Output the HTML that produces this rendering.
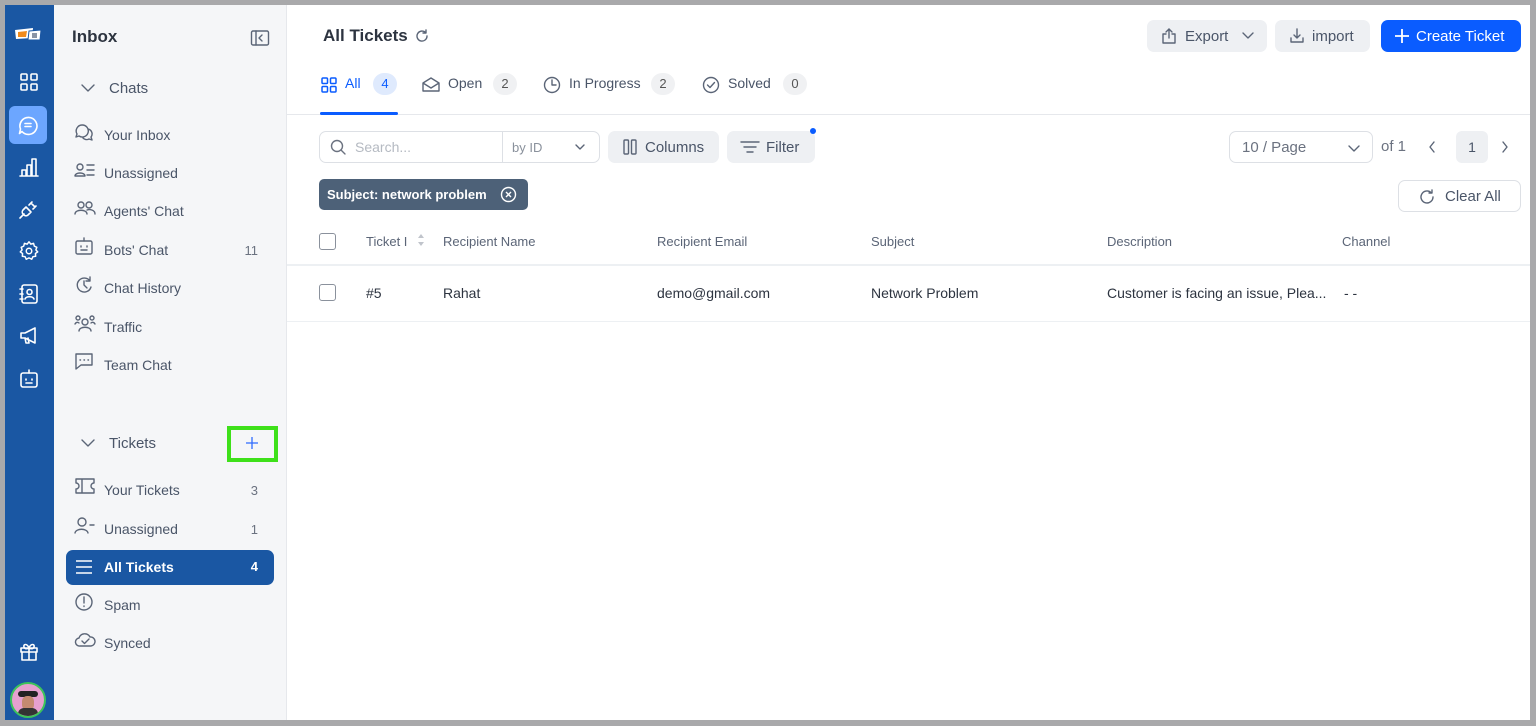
<!DOCTYPE html>
<html><head><meta charset="utf-8"><style>
*{box-sizing:border-box;margin:0;padding:0}
body{width:1536px;height:726px;background:#a9a9ab;font-family:"Liberation Sans",sans-serif;position:relative;overflow:hidden}
.a{position:absolute}
#frame{position:absolute;left:5px;top:5px;width:1525px;height:715px;background:#fff;overflow:hidden}
#rail{position:absolute;left:0;top:0;width:49px;height:715px;background:#1a57a3}
#side{position:absolute;left:49px;top:0;width:233px;height:715px;background:#f5f6f8;border-right:1px solid #e6e8ec}
.ic{position:absolute;stroke:#fff;fill:none;stroke-width:1.6;stroke-linecap:round;stroke-linejoin:round}
.si{position:absolute;stroke:#5b6577;fill:none;stroke-width:1.4;stroke-linecap:round;stroke-linejoin:round}
.it{position:absolute;left:50px;font-size:14px;color:#4a5568}
.cnt{position:absolute;right:28px;font-size:13px;color:#6b7280}
.hd{position:absolute;font-size:13px;color:#5b6577}
.btn{position:absolute;border-radius:7px;background:#eef0f3;font-size:15px;color:#4a5568}
.badge{display:inline-block;border-radius:12px;background:#f0f1f3;font-size:13px;color:#555;width:24px;height:22px;line-height:22px;text-align:center}
.tab{position:absolute;top:70px;font-size:14px;color:#4a5568}
.cb{position:absolute;width:17px;height:17px;border:1.5px solid #8a919c;border-radius:3px}
</style></head><body>
<div id="frame">
<div id="rail">
 <svg class="a" style="left:8px;top:22px" width="30" height="16" viewBox="0 0 30 16"><path d="M2 3 L20 1 L19 11 L3 12 Z" fill="#fff"/><path d="M5 5 L14 4 L13 10 L5 10Z" fill="#f08a1c"/><path d="M16 4 L28 3 L27 13 L15 13Z" fill="#fff" stroke="#1a57a3"/><rect x="19" y="6" width="5" height="5" fill="#8b95a5"/></svg>
 <svg class="ic" style="left:14px;top:67px" width="20" height="20" viewBox="0 0 20 20"><rect x="2" y="2" width="6" height="6" rx="1"/><rect x="12" y="2" width="6" height="6" rx="1"/><rect x="2" y="12" width="6" height="6" rx="1"/><rect x="12" y="12" width="6" height="6" rx="1"/></svg>
 <div class="a" style="left:4px;top:101px;width:38px;height:38px;border-radius:6px;background:#6ca6ff"></div>
 <svg class="ic" style="left:12px;top:109px" width="22" height="22" viewBox="0 0 22 22"><path d="M5 17.5A8.5 8.5 0 1 0 3.5 15L2.5 19.5z"/><path d="M8 9.5h6M8 12.5h6"/></svg>
 <svg class="ic" style="left:13px;top:151px" width="22" height="22" viewBox="0 0 22 22"><path d="M2 20h18M4 20v-6h4v6M9 20V9h4v11M14 20V3h4v17"/></svg>
 <svg class="ic" style="left:13px;top:193px" width="22" height="22" viewBox="0 0 22 22"><path d="M2 20l4-4M8 9l5 5-3 3a3 3 0 0 1-4 0l-1-1a3 3 0 0 1 0-4zM14 4l-3 3M18 8l-3 3M13 5l4 4"/></svg>
 <svg class="ic" style="left:13px;top:235px" width="22" height="22" viewBox="0 0 24 24"><circle cx="12" cy="12" r="3"/><path d="M12 2l2 2.5 3-.8.8 3L20.5 8l-1 2.8L21.5 13l-2.5 1.7.3 3-3 .5-1.3 2.8L12 19.5 9 21l-1.3-2.8-3-.5.3-3L2.5 13l2-2.2L3.5 8l2.7-1.3.8-3 3 .8z"/></svg>
 <svg class="ic" style="left:13px;top:278px" width="22" height="22" viewBox="0 0 22 22"><rect x="4" y="2" width="15" height="18" rx="2"/><circle cx="11.5" cy="9" r="2.5"/><path d="M7 16c1-3 8-3 9 0M2 6h3M2 11h3M2 16h3"/></svg>
 <svg class="ic" style="left:13px;top:320px" width="22" height="22" viewBox="0 0 22 22"><path d="M3 8h4l10-5v15L7 13H3zM7 13l1 5h3l-1-5"/></svg>
 <svg class="ic" style="left:13px;top:362px" width="22" height="22" viewBox="0 0 22 22"><rect x="3" y="6" width="16" height="14" rx="2"/><path d="M11 6V3M8 12v1M14 12v1M8 16h6"/></svg>
 <svg class="ic" style="left:13px;top:635px" width="22" height="22" viewBox="0 0 22 22"><rect x="3" y="8" width="16" height="4"/><path d="M4 12v8h14v-8M11 8v12M11 8c-2-5-6-4-5-1s5 1 5 1c2-5 6-4 5-1s-5 1-5 1"/></svg>
 <div class="a" style="left:5px;top:677px;width:36px;height:36px;border-radius:50%;border:2px solid #3cc45a;background:#e6a0cf;overflow:hidden"><div style="position:absolute;left:6px;top:7px;width:20px;height:6px;background:#222;border-radius:3px"></div><div style="position:absolute;left:10px;top:12px;width:12px;height:14px;background:#c48a70;border-radius:5px"></div><div style="position:absolute;left:6px;top:24px;width:20px;height:10px;background:#333;border-radius:6px 6px 0 0"></div></div>
</div>
<div id="side">
 <div class="a" style="left:18px;top:22px;font-size:17px;font-weight:bold;color:#2d3440">Inbox</div>
 <svg class="si" style="left:196px;top:24px" width="20" height="18" viewBox="0 0 20 18"><rect x="1.5" y="2" width="17" height="14" rx="1.5"/><path d="M6 2v14M12 6l-3 3 3 3"/></svg>
 <svg class="si" style="left:26px;top:77px" width="16" height="12" viewBox="0 0 16 12"><path d="M2 3l6 6 6-6"/></svg>
 <div class="a" style="left:55px;top:75px;font-size:15px;color:#4a5568">Chats</div>
 <svg class="si" style="left:20px;top:117px" width="20" height="20" viewBox="0 0 20 20"><path d="M8 3a6 6 0 0 0-5 9l-1 3 3-1a6 6 0 1 0 3-11zM14 7a5 5 0 0 1 3 8l1 3-3-1a5 5 0 0 1-6-1"/></svg><div class="it" style="top:122px">Your Inbox</div>
 <svg class="si" style="left:20px;top:155px" width="22" height="20" viewBox="0 0 22 20"><circle cx="6" cy="7" r="3"/><path d="M1 16c0-4 10-4 10 0zM13 5h7M13 10h7M13 15h7"/></svg><div class="it" style="top:160px">Unassigned</div>
 <svg class="si" style="left:20px;top:193px" width="22" height="20" viewBox="0 0 22 20"><circle cx="7" cy="7" r="3"/><circle cx="15" cy="7" r="3"/><path d="M1 16c0-5 12-5 12 0M13 12c3-1 8 0 8 4"/></svg><div class="it" style="top:198px">Agents' Chat</div>
 <svg class="si" style="left:20px;top:231px" width="20" height="20" viewBox="0 0 20 20"><rect x="2" y="5" width="16" height="13" rx="1.5"/><path d="M10 5V2M7 10v1M13 10v1M7 14h6"/></svg><div class="it" style="top:237px">Bots' Chat</div><div class="cnt" style="top:238px">11</div>
 <svg class="si" style="left:20px;top:270px" width="20" height="20" viewBox="0 0 20 20"><path d="M16 6A7 7 0 1 0 17 12M16 2v4h-4M10 6v4l3 3"/></svg><div class="it" style="top:275px">Chat History</div>
 <svg class="si" style="left:20px;top:308px" width="22" height="20" viewBox="0 0 22 20"><circle cx="11" cy="9" r="3"/><circle cx="4" cy="5" r="2"/><circle cx="18" cy="5" r="2"/><path d="M5 18c0-5 12-5 12 0M1 11c1-2 3-2 4-1M21 11c-1-2-3-2-4-1"/></svg><div class="it" style="top:314px">Traffic</div>
 <svg class="si" style="left:20px;top:346px" width="20" height="20" viewBox="0 0 20 20"><path d="M2 3h16v11H7l-5 4z"/><path d="M6 9h.5M10 9h.5M14 9h.5"/></svg><div class="it" style="top:352px">Team Chat</div>
 <svg class="si" style="left:26px;top:432px" width="16" height="12" viewBox="0 0 16 12"><path d="M2 3l6 6 6-6"/></svg>
 <div class="a" style="left:55px;top:430px;font-size:15px;color:#4a5568">Tickets</div>
 <div class="a" style="left:173px;top:421px;width:51px;height:36px;border:4px solid #3ee01a"></div>
 <svg class="a" style="left:192px;top:432px;stroke:#2f6bff;stroke-width:1.3" width="12" height="12" viewBox="0 0 12 12"><path d="M6 0v12M0 6h12"/></svg>
 <svg class="si" style="left:20px;top:471px" width="22" height="20" viewBox="0 0 22 20"><path d="M2 3h18v4a3 3 0 0 0 0 6v4H2v-4a3 3 0 0 0 0-6zM8 3v14"/></svg><div class="it" style="top:477px">Your Tickets</div><div class="cnt" style="top:478px">3</div>
 <svg class="si" style="left:20px;top:510px" width="22" height="20" viewBox="0 0 22 20"><circle cx="8" cy="7" r="4"/><path d="M1 18c1-5 12-5 13 0M16 10h4"/></svg><div class="it" style="top:516px">Unassigned</div><div class="cnt" style="top:517px">1</div>
 <div class="a" style="left:12px;top:545px;width:208px;height:35px;border-radius:7px;background:#1a57a3"></div>
 <svg class="a" style="left:21px;top:553px;stroke:#fff;stroke-width:1.6;fill:none" width="18" height="18" viewBox="0 0 18 18"><path d="M1 3h16M1 9h16M1 15h16"/></svg>
 <div class="it" style="top:554px;color:#fff;font-weight:bold">All Tickets</div><div class="cnt" style="top:554px;color:#fff;font-weight:bold">4</div>
 <svg class="si" style="left:20px;top:587px" width="20" height="20" viewBox="0 0 20 20"><circle cx="10" cy="10" r="8"/><path d="M10 5v6M10 14v.5"/></svg><div class="it" style="top:592px">Spam</div>
 <svg class="si" style="left:20px;top:625px" width="22" height="20" viewBox="0 0 22 20"><path d="M6 16a4 4 0 0 1-1-8 6 6 0 0 1 11-1 4.5 4.5 0 0 1 1 9zM8 11l2.5 2.5L15 9"/></svg><div class="it" style="top:630px">Synced</div>
</div>
<!-- main -->
<div class="a" style="left:318px;top:21px;font-size:17px;font-weight:bold;color:#2d3440">All Tickets</div>
<svg class="si" style="left:409px;top:23px" width="16" height="16" viewBox="0 0 16 16"><path d="M13 8a5 5 0 1 1-1.5-3.5M12 2v3h-3"/></svg>
<div class="btn" style="left:1142px;top:15px;width:120px;height:32px"><svg class="si" style="left:14px;top:8px" width="16" height="16" viewBox="0 0 16 16"><path d="M8 10V1M5 4l3-3 3 3M5 6H2v9h12V6h-3"/></svg><span class="a" style="left:38px;top:8px">Export</span><svg class="si" style="left:94px;top:11px" width="14" height="10" viewBox="0 0 14 10"><path d="M2 2l5 5 5-5"/></svg></div>
<div class="btn" style="left:1270px;top:15px;width:95px;height:32px"><svg class="si" style="left:14px;top:8px" width="16" height="16" viewBox="0 0 16 16"><path d="M8 1v9M5 7l3 3 3-3M2 10v4h12v-4"/></svg><span class="a" style="left:37px;top:8px">import</span></div>
<div class="a" style="left:1376px;top:15px;width:140px;height:32px;border-radius:7px;background:#0a5cff;color:#fff;font-size:15px"><svg class="a" style="left:14px;top:9px;stroke:#fff;stroke-width:1.8" width="14" height="14" viewBox="0 0 14 14"><path d="M7 0v14M0 7h14"/></svg><span class="a" style="left:35px;top:8px">Create Ticket</span></div>
<!-- tabs -->
<svg class="a" style="left:316px;top:72px;stroke:#0a5cff;fill:none;stroke-width:1.5" width="16" height="16" viewBox="0 0 16 16"><rect x="1" y="1" width="5.5" height="5.5" rx="1"/><rect x="9.5" y="1" width="5.5" height="5.5" rx="1"/><rect x="1" y="9.5" width="5.5" height="5.5" rx="1"/><rect x="9.5" y="9.5" width="5.5" height="5.5" rx="1"/></svg>
<div class="tab" style="left:340px;color:#0a5cff">All</div><div class="a" style="left:368px;top:68px"><span class="badge" style="background:#dfeafd;color:#0a5cff">4</span></div>
<svg class="si" style="left:417px;top:71px" width="18" height="17" viewBox="0 0 18 17"><path d="M1 7l8-5 8 5v8H1zM1 7l8 5 8-5"/></svg>
<div class="tab" style="left:443px">Open</div><div class="a" style="left:488px;top:68px"><span class="badge">2</span></div>
<svg class="si" style="left:538px;top:71px" width="18" height="18" viewBox="0 0 18 18"><circle cx="9" cy="9" r="7.5"/><path d="M9 4v5h4"/></svg>
<div class="tab" style="left:564px">In Progress</div><div class="a" style="left:646px;top:68px"><span class="badge">2</span></div>
<svg class="si" style="left:697px;top:71px" width="18" height="18" viewBox="0 0 18 18"><circle cx="9" cy="9" r="7.5"/><path d="M5.5 9l2.5 2.5L12.5 6.5"/></svg>
<div class="tab" style="left:723px">Solved</div><div class="a" style="left:778px;top:68px"><span class="badge">0</span></div>
<div class="a" style="left:282px;top:109px;width:1243px;height:1px;background:#e6e8ec"></div>
<div class="a" style="left:315px;top:107px;width:78px;height:3px;background:#0a5cff;border-radius:2px;z-index:2"></div>
<!-- toolbar -->
<div class="a" style="left:314px;top:126px;width:281px;height:32px;border:1px solid #dde0e5;border-radius:7px"></div>
<div class="a" style="left:497px;top:127px;width:1px;height:30px;background:#dde0e5"></div>
<svg class="si" style="left:325px;top:134px;stroke:#6b7280" width="16" height="16" viewBox="0 0 16 16"><circle cx="7" cy="7" r="5.5"/><path d="M11 11l4 4"/></svg>
<div class="a" style="left:350px;top:134px;font-size:14px;color:#b5bac2">Search...</div>
<div class="a" style="left:507px;top:135px;font-size:13px;color:#8a919c">by ID</div>
<svg class="si" style="left:569px;top:138px" width="12" height="8" viewBox="0 0 12 8"><path d="M2 2l4 4 4-4"/></svg>
<div class="btn" style="left:603px;top:126px;width:111px;height:32px"><svg class="si" style="left:15px;top:8px" width="14" height="16" viewBox="0 0 14 16"><rect x="1" y="1" width="4.5" height="14" rx="1"/><rect x="8.5" y="1" width="4.5" height="14" rx="1"/></svg><span class="a" style="left:37px;top:8px">Columns</span></div>
<div class="btn" style="left:722px;top:126px;width:88px;height:32px"><svg class="si" style="left:13px;top:9px" width="20" height="14" viewBox="0 0 20 14"><path d="M1 2h18M4 7h12M7 12h6"/></svg><span class="a" style="left:39px;top:8px">Filter</span></div>
<div class="a" style="left:805px;top:123px;width:6px;height:6px;border-radius:50%;background:#0a5cff"></div>
<div class="a" style="left:1224px;top:126px;width:144px;height:32px;border:1px solid #dde0e5;border-radius:7px"><span class="a" style="left:12px;top:7px;font-size:15px;color:#6b7280">10 / Page</span><svg class="si" style="left:117px;top:12px" width="14" height="9" viewBox="0 0 14 9"><path d="M2 2l5 5 5-5"/></svg></div>
<div class="a" style="left:1376px;top:133px;font-size:15px;color:#6b7280">of 1</div>
<svg class="si" style="left:1422px;top:135px" width="10" height="14" viewBox="0 0 10 14"><path d="M7 2L3 7l4 5"/></svg>
<div class="a" style="left:1451px;top:126px;width:32px;height:32px;border-radius:6px;background:#eef0f3;text-align:center;line-height:32px;font-size:14px;color:#4a5568">1</div>
<svg class="si" style="left:1495px;top:135px" width="10" height="14" viewBox="0 0 10 14"><path d="M3 2l4 5-4 5"/></svg>
<div class="a" style="left:314px;top:174px;width:209px;height:31px;border-radius:5px;background:#4d6178;color:#fff;font-size:13px;font-weight:bold"><span class="a" style="left:8px;top:8px">Subject: network problem</span><svg class="a" style="left:181px;top:7px;stroke:#fff;fill:none;stroke-width:1.4" width="17" height="17" viewBox="0 0 17 17"><circle cx="8.5" cy="8.5" r="7"/><path d="M6 6l5 5M11 6l-5 5"/></svg></div>
<div class="a" style="left:1393px;top:175px;width:123px;height:32px;border:1px solid #dde0e5;border-radius:7px"><svg class="si" style="left:19px;top:7px" width="18" height="18" viewBox="0 0 18 18"><path d="M15 9a6 6 0 1 1-2-4.5M14 2v3h-3"/></svg><span class="a" style="left:46px;top:7px;font-size:15px;color:#4a5568">Clear All</span></div>
<!-- table -->
<div class="cb" style="left:314px;top:228px"></div>
<div class="hd" style="left:361px;top:229px">Ticket I</div>
<svg class="a" style="left:411px;top:228px" width="10" height="14" viewBox="0 0 10 14"><path d="M5 1l3 4H2zM5 13l3-4H2z" fill="#c0c4cb"/></svg>
<div class="hd" style="left:438px;top:229px">Recipient Name</div>
<div class="hd" style="left:652px;top:229px">Recipient Email</div>
<div class="hd" style="left:866px;top:229px">Subject</div>
<div class="hd" style="left:1102px;top:229px">Description</div>
<div class="hd" style="left:1337px;top:229px">Channel</div>
<div class="a" style="left:282px;top:259px;width:1243px;height:2px;background:#edf0f3"></div>
<div class="cb" style="left:314px;top:279px"></div>
<div class="a" style="left:361px;top:280px;font-size:14px;color:#2d3440">#5</div>
<div class="a" style="left:438px;top:280px;font-size:14px;color:#2d3440">Rahat</div>
<div class="a" style="left:652px;top:280px;font-size:14px;color:#2d3440">demo@gmail.com</div>
<div class="a" style="left:866px;top:280px;font-size:14px;color:#2d3440">Network Problem</div>
<div class="a" style="left:1102px;top:280px;font-size:14px;color:#2d3440">Customer is facing an issue, Plea...</div>
<div class="a" style="left:1339px;top:280px;font-size:14px;color:#2d3440">- -</div>
<div class="a" style="left:282px;top:316px;width:1243px;height:1px;background:#edf0f3"></div>
</div>
</body></html>
